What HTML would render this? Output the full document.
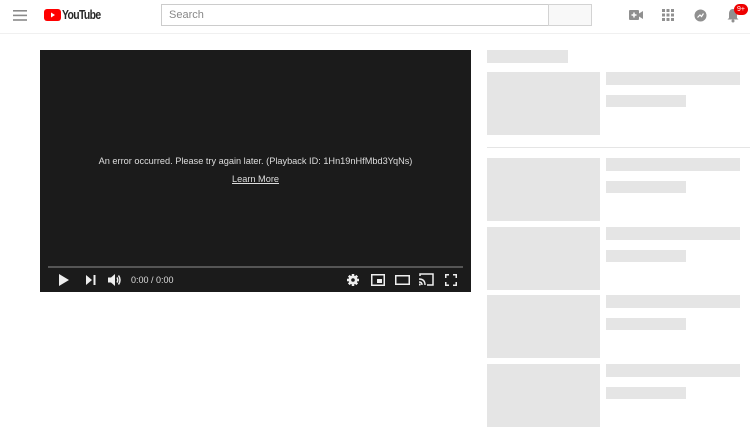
<!DOCTYPE html>
<html><head><style>
*{margin:0;padding:0;box-sizing:border-box}
body{width:750px;height:420px;overflow:hidden;background:#fff;font-family:"Liberation Sans",sans-serif;position:relative}
.a{position:absolute}
.g{background:#e5e5e5}
.ic{fill:#909090}
</style></head><body>
<div class="a" style="left:0;top:0;width:750px;height:34px;border-bottom:1px solid #f0f0f0"></div>
<svg class="a" style="left:13px;top:10px" width="14" height="11"><rect y="0" width="14" height="1.6" fill="#8a8a8a"/><rect y="4.6" width="14" height="1.6" fill="#8a8a8a"/><rect y="9.2" width="14" height="1.6" fill="#8a8a8a"/></svg>
<svg class="a" style="left:44px;top:9px" width="17" height="12"><rect width="17" height="12" rx="3" fill="#f00"/><path d="M7 3.5L11 6L7 8.5Z" fill="#fff"/></svg>
<div class="a" style="left:62px;top:7px;font-size:13px;font-weight:bold;letter-spacing:-0.8px;color:#282828;transform:scaleX(0.8);transform-origin:left">YouTube</div>
<div class="a" style="left:161px;top:4px;width:388px;height:22px;border:1px solid #ccc;font-size:11px;color:#888;padding:4px 7px">Search</div>
<div class="a" style="left:548px;top:4px;width:44px;height:22px;border:1px solid #d3d3d3;background:#f8f8f8"></div>
<svg class="a" style="left:629px;top:10px" width="14" height="10"><rect width="10" height="10" rx="1" class="ic"/><path d="M10 3.5L14 1V9L10 6.5Z" class="ic"/><path d="M5 2.5V7.5M2.5 5H7.5" stroke="#fff" stroke-width="1.5"/></svg>
<svg class="a" style="left:662px;top:9px" width="12" height="12"><g class="ic"><rect x="0" y="0" width="3" height="3"/><rect x="4.5" y="0" width="3" height="3"/><rect x="9" y="0" width="3" height="3"/><rect x="0" y="4.5" width="3" height="3"/><rect x="4.5" y="4.5" width="3" height="3"/><rect x="9" y="4.5" width="3" height="3"/><rect x="0" y="9" width="3" height="3"/><rect x="4.5" y="9" width="3" height="3"/><rect x="9" y="9" width="3" height="3"/></g></svg>
<svg class="a" style="left:694px;top:9px" width="13" height="13"><circle cx="6.5" cy="6.5" r="6" class="ic"/><path d="M3.5 8.5L6 6L7.5 7.5L9.5 4.5" stroke="#fff" stroke-width="1.2" fill="none"/></svg>
<svg class="a" style="left:726px;top:7px" width="14" height="16"><path d="M7 2C4 2 3 4.5 3 7V11L1.5 12.5H12.5L11 11V7C11 4.5 10 2 7 2Z" class="ic"/><circle cx="7" cy="14" r="1.5" class="ic"/></svg>
<div class="a" style="left:734px;top:4px;width:14px;height:11px;border-radius:6px;background:#e00;color:#fff;font-size:7px;text-align:center;line-height:11px">9+</div>

<div class="a" style="left:40px;top:50px;width:431px;height:242px;background:#1b1b1b"></div>
<div class="a" style="left:40px;top:156px;width:431px;text-align:center;color:#ddd;font-size:9.2px">An error occurred. Please try again later. (Playback ID: 1Hn19nHfMbd3YqNs)</div>
<div class="a" style="left:40px;top:174px;width:431px;text-align:center;color:#ddd;font-size:9.2px"><span style="text-decoration:underline">Learn More</span></div>
<div class="a" style="left:48px;top:266px;width:415px;height:2px;background:#555"></div>
<svg class="a" style="left:58px;top:274px" width="12" height="12"><path d="M1 0L11 6L1 12Z" fill="#eee"/></svg>
<svg class="a" style="left:86px;top:275px" width="10" height="10"><path d="M0 0L6 5L0 10Z" fill="#eee"/><rect x="7.5" y="0" width="2" height="10" fill="#eee"/></svg>
<svg class="a" style="left:108px;top:273px" width="14" height="14"><path d="M0 4.5H3L7 1V13L3 9.5H0Z" fill="#eee"/><path d="M9 4.5Q10.5 7 9 9.5M10.5 2.5Q13.5 7 10.5 11.5" stroke="#eee" stroke-width="1.5" fill="none"/></svg>
<div class="a" style="left:131px;top:275px;color:#ddd;font-size:9px">0:00 / 0:00</div>
<svg class="a" style="left:347px;top:274px" width="12" height="12"><circle cx="6" cy="6" r="4.5" fill="#eee"/><g stroke="#eee" stroke-width="2.5"><path d="M6 0V12M0 6H12M1.8 1.8L10.2 10.2M10.2 1.8L1.8 10.2"/></g><circle cx="6" cy="6" r="1.8" fill="#1b1b1b"/></svg>
<svg class="a" style="left:371px;top:274px" width="14" height="12"><rect x="0.75" y="0.75" width="12.5" height="10.5" fill="none" stroke="#eee" stroke-width="1.5"/><rect x="6" y="5" width="5" height="4" fill="#eee"/></svg>
<svg class="a" style="left:395px;top:275px" width="15" height="10"><rect x="0.75" y="0.75" width="13.5" height="8.5" fill="none" stroke="#eee" stroke-width="1.5"/></svg>
<svg class="a" style="left:419px;top:273px" width="15" height="13"><path d="M1 3V1H14V12H8" fill="none" stroke="#eee" stroke-width="1.5"/><path d="M0 6Q6 6 6 12M0 9Q3 9 3 12" fill="none" stroke="#eee" stroke-width="1.4"/><circle cx="0.8" cy="11.5" r="1" fill="#eee"/></svg>
<svg class="a" style="left:445px;top:274px" width="12" height="12"><path d="M0.75 4V0.75H4M8 0.75H11.25V4M11.25 8V11.25H8M4 11.25H0.75V8" fill="none" stroke="#eee" stroke-width="1.5"/></svg>

<div class="a g" style="left:487px;top:50px;width:81px;height:13px"></div>
<div class="a g" style="left:487px;top:72px;width:113px;height:63px"></div>
<div class="a g" style="left:606px;top:72px;width:134px;height:13px"></div>
<div class="a g" style="left:606px;top:95px;width:80px;height:12px"></div>
<div class="a" style="left:487px;top:147px;width:263px;height:1px;background:#e5e5e5"></div>
<div class="a g" style="left:487px;top:158px;width:113px;height:63px"></div>
<div class="a g" style="left:606px;top:158px;width:134px;height:13px"></div>
<div class="a g" style="left:606px;top:181px;width:80px;height:12px"></div>
<div class="a g" style="left:487px;top:227px;width:113px;height:63px"></div>
<div class="a g" style="left:606px;top:227px;width:134px;height:13px"></div>
<div class="a g" style="left:606px;top:250px;width:80px;height:12px"></div>
<div class="a g" style="left:487px;top:295px;width:113px;height:63px"></div>
<div class="a g" style="left:606px;top:295px;width:134px;height:13px"></div>
<div class="a g" style="left:606px;top:318px;width:80px;height:12px"></div>
<div class="a g" style="left:487px;top:364px;width:113px;height:63px"></div>
<div class="a g" style="left:606px;top:364px;width:134px;height:13px"></div>
<div class="a g" style="left:606px;top:387px;width:80px;height:12px"></div>
</body></html>
